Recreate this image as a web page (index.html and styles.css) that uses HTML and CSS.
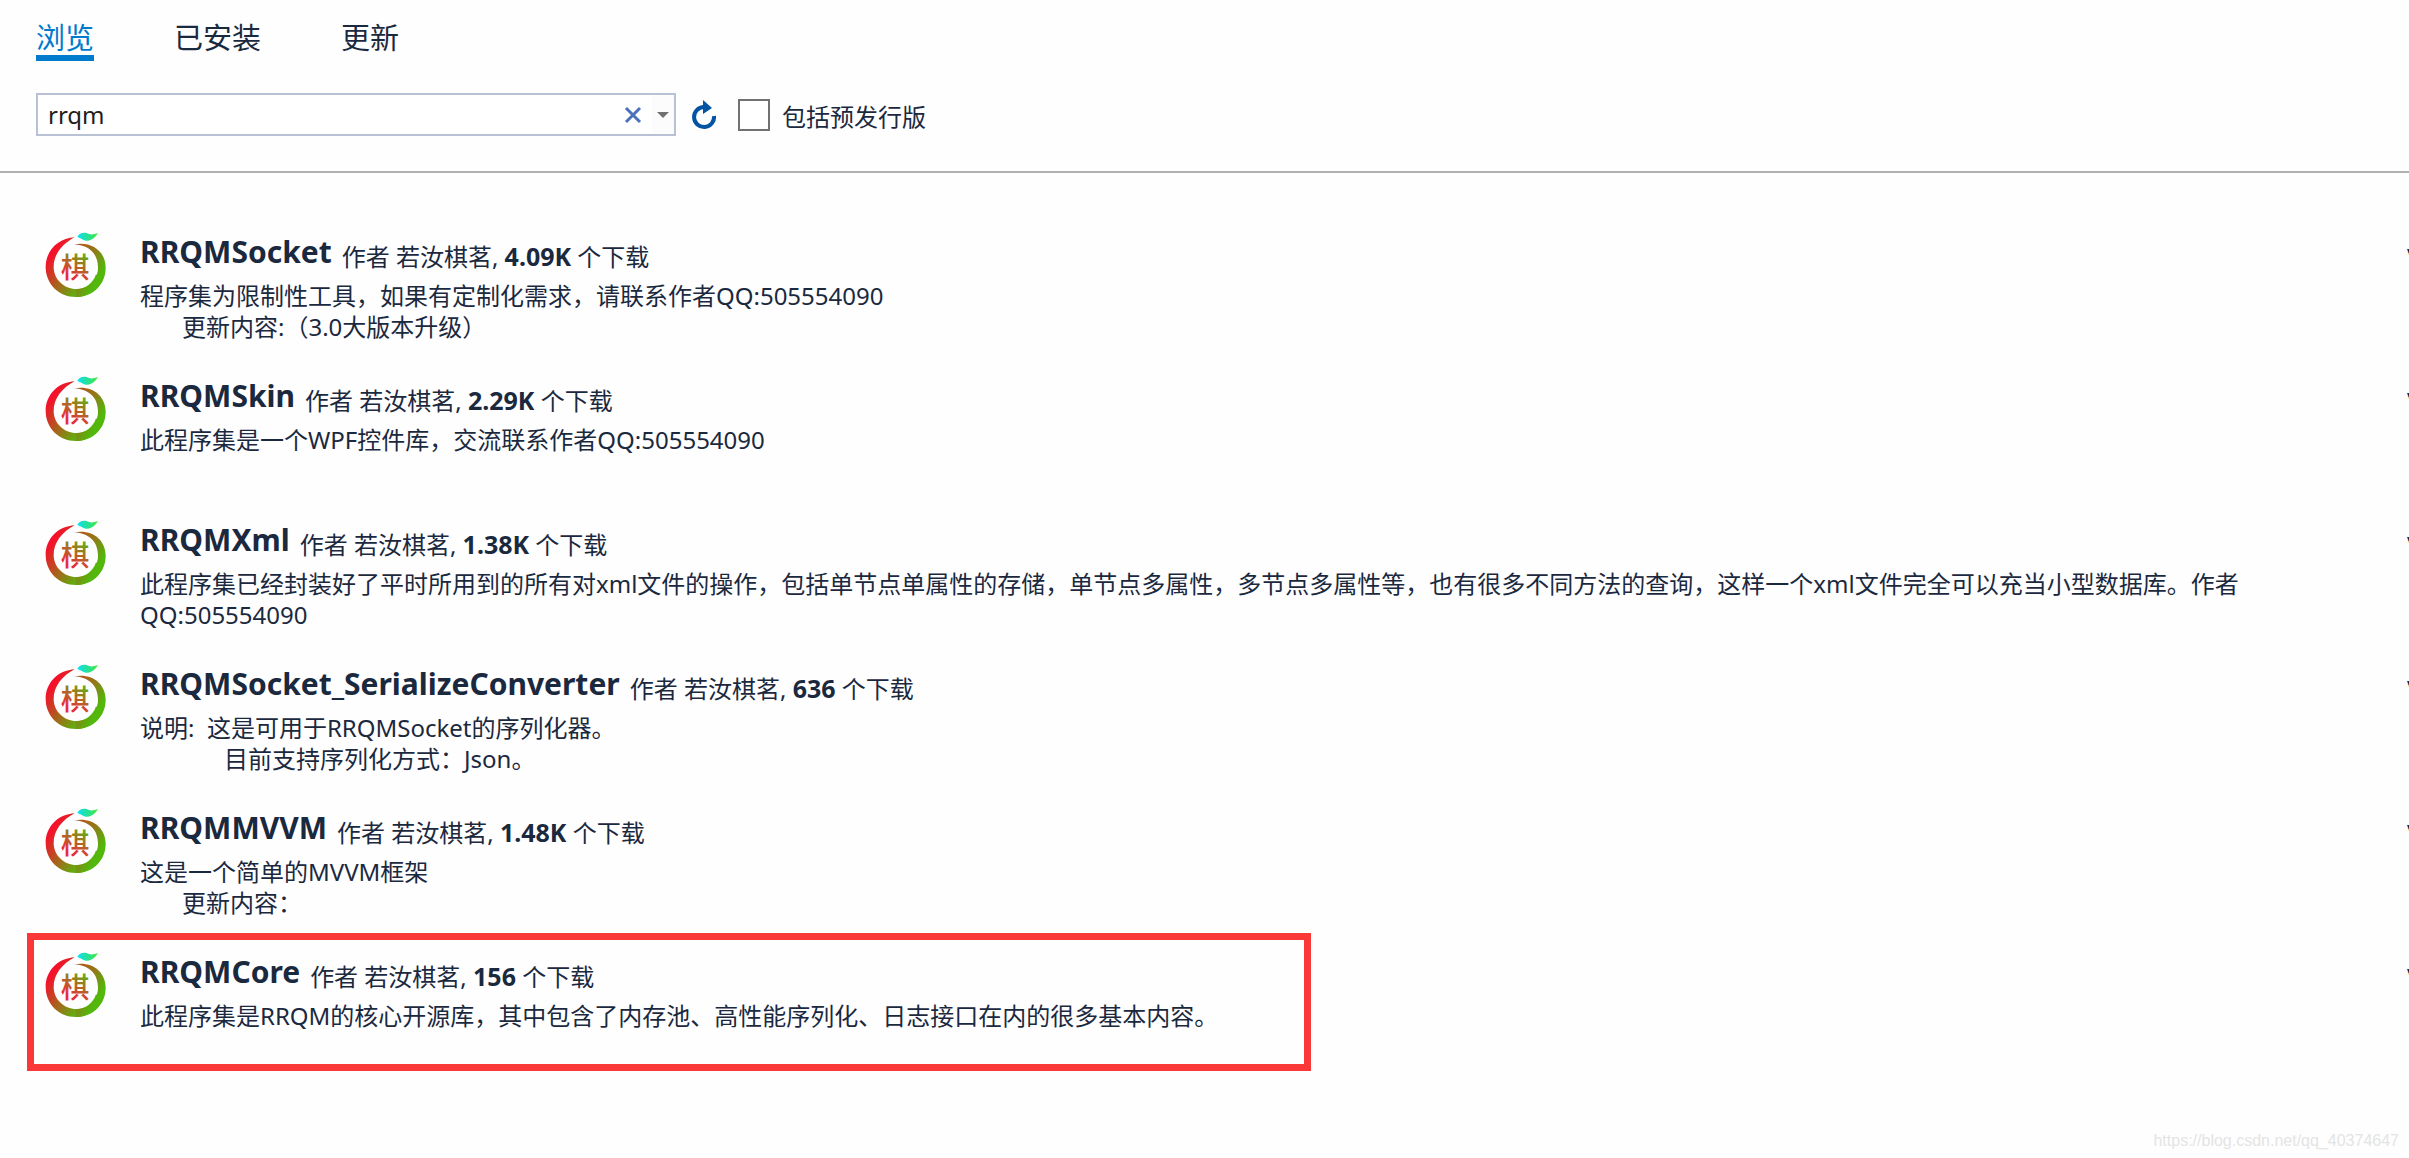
FILE: index.html
```html
<!DOCTYPE html>
<html lang="zh-CN">
<head>
    <meta charset="UTF-8">
    <meta name="viewport" content="width=device-width, initial-scale=1.0">
    <title>NuGet</title>
    <link rel="stylesheet" href="styles.css">
</head>
<body>

<!-- Package logo, shared by all rows -->
<svg class="defs" aria-hidden="true">
    <defs>
        <linearGradient id="ring" x1="0" y1="0.25" x2="0.8" y2="0.85">
            <stop offset="0.1" stop-color="#f5102c"/>
            <stop offset="0.5" stop-color="#a8641c"/>
            <stop offset="0.9" stop-color="#52bd0c"/>
        </linearGradient>
        <linearGradient id="brush" x1="0" y1="0" x2="1" y2="1">
            <stop offset="0" stop-color="#c34a20"/>
            <stop offset="0.4" stop-color="#8f7a18"/>
            <stop offset="0.7" stop-color="#52b80c"/>
        </linearGradient>
        <linearGradient id="leaf" x1="0" y1="0" x2="1" y2="0">
            <stop offset="0" stop-color="#10dcf4"/>
            <stop offset="1" stop-color="#3ce83a"/>
        </linearGradient>
        <linearGradient id="glyph" x1="0.8" y1="0" x2="0.4" y2="1">
            <stop offset="0.15" stop-color="#54b414"/>
            <stop offset="0.5" stop-color="#b06a24"/>
            <stop offset="0.85" stop-color="#ee2440"/>
        </linearGradient>
    </defs>
    <symbol id="logo" viewBox="40 45 195 210">
        <path fill="url(#ring)" d="M135 67 C84 70 48 108 48 156 C48 207 88 246 138 246 C176 246 207 224 220 192 L199 178 C190 205 168 222 140 222 C103 222 72 193 72 156 C72 119 96 88 135 67Z"/>
        <path fill="url(#brush)" d="M133 88 C190 78 228 112 228 158 C228 208 190 246 138 246 L140 222 C178 222 205 193 205 158 C205 119 182 91 133 88Z"/>
        <path fill="url(#leaf)" d="M143 66 C150 50 168 52 178 57 C188 60 196 57 205 54 C199 65 190 74 176 77 C162 79 154 69 143 66Z"/>
        <text class="logo-char" x="136" y="189" text-anchor="middle" fill="url(#glyph)">棋</text>
    </symbol>
</svg>

<header class="toolbar">
    <nav class="tabs">
        <a class="tab active" href="#browse">浏览</a>
        <a class="tab" href="#installed">已安装</a>
        <a class="tab" href="#updates">更新</a>
    </nav>

    <form class="filters">
        <div class="search">
            <input class="search-input" type="text" value="rrqm" aria-label="搜索">
            <button class="search-clear" type="button" aria-label="清除">
                <svg width="18" height="18" viewBox="0 0 18 18"><path d="M2 2 L16 16 M16 2 L2 16" stroke="#4a72ba" stroke-width="3" fill="none"/></svg>
            </button>
            <button class="search-drop" type="button" aria-label="历史记录">
                <svg width="12" height="6" viewBox="0 0 12 6"><path d="M0 0 H12 L6 6Z" fill="#717171"/></svg>
            </button>
        </div>
        <button class="refresh" type="button" aria-label="刷新">
            <svg width="26" height="30" viewBox="0 0 26 30">
                <path d="M13 7 A10 10 0 1 0 23 16" stroke="#0355a3" stroke-width="4" fill="none"/>
                <path d="M12 0 L21 8 L12 14Z" fill="#0355a3"/>
            </svg>
        </button>
        <input class="check" type="checkbox" id="prerelease">
        <label class="check-label" for="prerelease">包括预发行版</label>
    </form>
</header>

<ul class="packages">
    <li class="package">
        <svg class="logo" aria-hidden="true"><use href="#logo"/></svg>
        <div class="info">
            <div class="heading">
                <h2 class="name">RRQMSocket</h2>
                <span class="meta">作者 若汝棋茗, <b>4.09K</b> 个下载</span>
            </div>
            <p class="desc">程序集为限制性工具，如果有定制化需求，请联系作者QQ:505554090</p>
            <p class="desc indent">更新内容:（3.0大版本升级）</p>
        </div>
        <span class="version">v</span>
    </li>
    <li class="package">
        <svg class="logo" aria-hidden="true"><use href="#logo"/></svg>
        <div class="info">
            <div class="heading">
                <h2 class="name">RRQMSkin</h2>
                <span class="meta">作者 若汝棋茗, <b>2.29K</b> 个下载</span>
            </div>
            <p class="desc">此程序集是一个WPF控件库，交流联系作者QQ:505554090</p>
        </div>
        <span class="version">v</span>
    </li>
    <li class="package">
        <svg class="logo" aria-hidden="true"><use href="#logo"/></svg>
        <div class="info">
            <div class="heading">
                <h2 class="name">RRQMXml</h2>
                <span class="meta">作者 若汝棋茗, <b>1.38K</b> 个下载</span>
            </div>
            <p class="desc">此程序集已经封装好了平时所用到的所有对xml文件的操作，包括单节点单属性的存储，单节点多属性，多节点多属性等，也有很多不同方法的查询，这样一个xml文件完全可以充当小型数据库。作者QQ:505554090</p>
        </div>
        <span class="version">v</span>
    </li>
    <li class="package">
        <svg class="logo" aria-hidden="true"><use href="#logo"/></svg>
        <div class="info">
            <div class="heading">
                <h2 class="name">RRQMSocket_SerializeConverter</h2>
                <span class="meta">作者 若汝棋茗, <b>636</b> 个下载</span>
            </div>
            <p class="desc">说明:&nbsp; 这是可用于RRQMSocket的序列化器。</p>
            <p class="desc indent-more">目前支持序列化方式：Json。</p>
        </div>
        <span class="version">v</span>
    </li>
    <li class="package">
        <svg class="logo" aria-hidden="true"><use href="#logo"/></svg>
        <div class="info">
            <div class="heading">
                <h2 class="name">RRQMMVVM</h2>
                <span class="meta">作者 若汝棋茗, <b>1.48K</b> 个下载</span>
            </div>
            <p class="desc">这是一个简单的MVVM框架</p>
            <p class="desc indent">更新内容：</p>
        </div>
        <span class="version">v</span>
    </li>
    <li class="package marked">
        <svg class="logo" aria-hidden="true"><use href="#logo"/></svg>
        <div class="info">
            <div class="heading">
                <h2 class="name">RRQMCore</h2>
                <span class="meta">作者 若汝棋茗, <b>156</b> 个下载</span>
            </div>
            <p class="desc">此程序集是RRQM的核心开源库，其中包含了内存池、高性能序列化、日志接口在内的很多基本内容。</p>
        </div>
        <span class="version">v</span>
    </li>
</ul>

<div class="watermark">https://blog.csdn.net/qq_40374647</div>

</body>
</html>
```
FILE: styles.css
```css
*, *::after {
    box-sizing: border-box;
}
body {
    margin: 0;
    min-height: 100vh;
    position: relative;
    background-color: #fefefe;
    color: #1b293e;
    font-family: "Noto Sans", "Noto Sans CJK SC", sans-serif;
    font-size: 24px;
    line-height: 31px;
}
button {
    display: flex;
    align-items: center;
    justify-content: center;
    padding: 0;
    border: none;
    background: none;
    cursor: pointer;
}
.defs {
    position: absolute;
    width: 0;
    height: 0;
}

/* Tabs and search */
.toolbar {
    padding: 20px 36px 35px;
    border-bottom: 2px solid #b1b1b1;
}
.tabs {
    display: flex;
    gap: 80px;
}
.tab {
    border-bottom: 6px solid transparent;
    color: #1b293e;
    font-size: 29px;
    line-height: 35px;
    text-decoration: none;
}
.tab.active {
    color: #007acc;
    border-color: #007acc;
}
.filters {
    display: flex;
    align-items: center;
    margin-top: 32px;
}
.search {
    display: flex;
    width: 640px;
    height: 43px;
    border: 2px solid #b9c2d4;
    background-color: #fff;
}
.search-input {
    flex: 1;
    min-width: 0;
    padding: 0 10px;
    border: none;
    outline: none;
    background: none;
    color: #1e1e1e;
    font: inherit;
}
.search-clear {
    width: 38px;
}
.search-drop {
    width: 22px;
    background-color: #fcfcfc;
}
.refresh {
    margin: 0 21px 0 15px;
}
.check {
    appearance: none;
    width: 32px;
    height: 32px;
    margin: 0 12px 0 0;
    border: 2px solid #717171;
    background-color: #fff;
}
.check:checked {
    background-color: #007acc;
}
.check-label {
    padding-top: 3px;
}

/* Package list */
.packages {
    margin: 0;
    padding: 40px 0 0;
    list-style: none;
}
.package {
    display: flex;
    position: relative;
    min-height: 144px;
    padding: 17px 0 0 43px;
}
.logo {
    flex: none;
    width: 65px;
    height: 70px;
    margin-right: 32px;
}
.logo-char {
    font-family: "Noto Sans CJK SC", sans-serif;
    font-size: 86px;
    font-weight: 500;
}
.info {
    flex: 1;
    min-width: 0;
}
.heading {
    display: flex;
    align-items: flex-end;
    gap: 10px;
    height: 42px;
    margin-bottom: 8px;
}
.name {
    margin: 0;
    font-size: 30px;
    line-height: 40px;
}
.meta {
    line-height: 31px;
}
.meta b {
    font-size: 25px;
}
.desc {
    margin: 0;
}
.indent {
    padding-left: 42px;
}
.indent-more {
    padding-left: 84px;
}
.version {
    flex: none;
    width: 2px;
    margin: 7px 0 0 24px;
    overflow: hidden;
}

/* Red frame drawn over the row */
.marked::after {
    content: "";
    position: absolute;
    top: 0;
    left: 27px;
    width: 53.3%;
    height: 138px;
    border: 7px solid #fb3838;
}

.watermark {
    position: absolute;
    right: 10px;
    bottom: 2px;
    color: #e4e4e4;
    font-family: "Liberation Sans", sans-serif;
    font-size: 16px;
}
```
